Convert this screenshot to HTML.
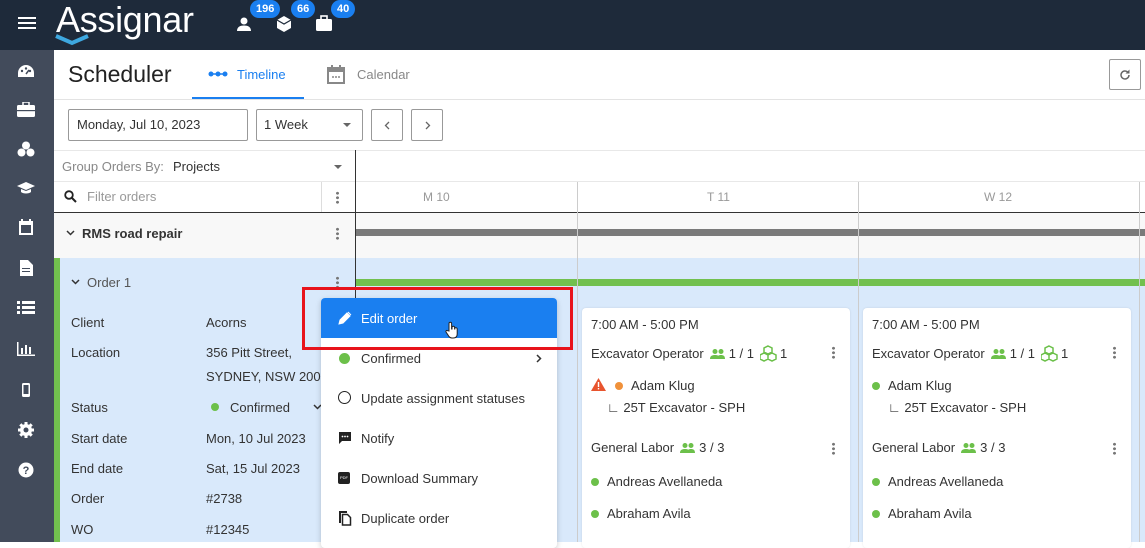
<!DOCTYPE html>
<html><head><meta charset="utf-8"><style>
*{margin:0;padding:0;box-sizing:border-box}
body{width:1145px;height:542px;overflow:hidden;position:relative;background:#fff;font-family:"Liberation Sans",sans-serif;color:#333;font-size:13px}
.a{position:absolute}
.t{position:absolute;white-space:nowrap}
.badge{position:absolute;background:#1a7ff0;color:#fff;font-weight:bold;font-size:11px;border-radius:10px;height:18px;line-height:18px;padding:0 6px}
.sb svg{position:absolute;left:17px;fill:#fff}
.dots{position:absolute;width:3px;height:13px;background:radial-gradient(circle,#777 1.3px,transparent 1.6px) 0 0/3px 4.5px repeat-y}
.card{position:absolute;top:308px;width:268px;height:240px;background:#fff;border-radius:4px;box-shadow:0 0 2px rgba(0,0,0,.1)}
.dot{position:absolute;width:8px;height:8px;border-radius:50%;background:#6cc04a}
.mi{position:absolute;left:40px;font-size:13px;color:#333}
.pp{display:inline-block;vertical-align:-2px;margin:0 3px 0 6px}
</style></head><body>
<svg width="0" height="0" style="position:absolute"><defs>
<g id="ppl"><circle cx="5" cy="3.5" r="2.5"/><circle cx="11" cy="3.5" r="2.5"/><path d="M0 11c0-3 2-4 5-4s5 1 5 4z M7 11c0-3 1.5-4 4-4s4 1 4 4z"/></g>
<g id="cub"><path d="M8 1l4 2v4l-4 2-4-2V3z M4 8l4 2v4l-4 2-4-2v-4z M12 8l4 2v4l-4 2-4-2v-4z" fill="none" stroke="#6cc04a" stroke-width="1.5"/></g>
</defs></svg>
<!-- top bar -->
<div class="a" style="left:0;top:0;width:1145px;height:50px;background:#1e2a3a"></div>
<div class="a" style="left:18px;top:17px;width:18px;height:2px;background:#fff;box-shadow:0 5px 0 #fff,0 10px 0 #fff"></div>
<div class="t" style="left:56px;top:-1px;font-size:36px;color:#fff;letter-spacing:-0.3px">Assignar</div>
<svg class="a" style="left:54px;top:34px" width="36" height="12"><path d="M2 2 L18 9 L34 2" stroke="#3ea8e0" stroke-width="4" fill="none"/></svg>
<svg class="a" style="left:236px;top:16px" width="16" height="16" fill="#fff"><circle cx="8" cy="5" r="3.5"/><path d="M1 15c0-4 3-5.5 7-5.5s7 1.5 7 5.5z"/></svg>
<svg class="a" style="left:276px;top:15px" width="16" height="18" fill="#fff"><path d="M8 1l7 4v8l-7 4-7-4V5z"/><path d="M1 5l7 4 7-4" stroke="#1e2a3a" stroke-width="1.2" fill="none"/></svg>
<svg class="a" style="left:315px;top:14px" width="18" height="18" fill="#fff"><rect x="1" y="5" width="16" height="12" rx="1.5"/><rect x="6" y="2" width="6" height="4" fill="none" stroke="#fff" stroke-width="1.6"/></svg>
<div class="badge" style="left:250px;top:0">196</div>
<div class="badge" style="left:291px;top:0">66</div>
<div class="badge" style="left:331px;top:0">40</div>
<!-- sidebar -->
<div class="a sb" style="left:0;top:50px;width:54px;height:492px;background:#424b5b">
<svg style="top:14px" width="18" height="14"><path d="M9 1a8 8 0 0 0-8 8v4h16V9a8 8 0 0 0-8-8z"/><circle cx="5" cy="7" r="1.2" fill="#424b5b"/><circle cx="9" cy="4.5" r="1.2" fill="#424b5b"/><circle cx="13" cy="7" r="1.2" fill="#424b5b"/><path d="M9 10l3-4" stroke="#424b5b" stroke-width="1.5"/></svg>
<svg style="top:52px" width="18" height="15"><rect x="0" y="3" width="18" height="12" rx="1.5"/><rect x="6" y="0" width="6" height="4" fill="none" stroke="#fff" stroke-width="1.5"/><rect x="0" y="8" width="18" height="1.2" fill="#424b5b"/></svg>
<svg style="top:91px" width="18" height="16"><circle cx="9" cy="4.5" r="4"/><circle cx="4.5" cy="11.5" r="4"/><circle cx="13.5" cy="11.5" r="4"/></svg>
<svg style="top:131px" width="18" height="14"><path d="M9 1L0 5l9 4 9-4z"/><path d="M4 8v3c2 2 8 2 10 0V8l-5 2z"/></svg>
<svg style="top:168px" width="18" height="18"><path d="M2 3h14v14H2z M4 7v8h10V7z" fill-rule="evenodd"/><rect x="4" y="1" width="2" height="4"/><rect x="12" y="1" width="2" height="4"/></svg>
<svg style="top:209px" width="18" height="18"><path d="M3 1h8l5 5v11H3z M5 9h8v1H5z M5 12h8v1H5z" fill-rule="evenodd"/></svg>
<svg style="top:251px" width="18" height="14"><rect x="0" y="0" width="3" height="3"/><rect x="5" y="0" width="13" height="3"/><rect x="0" y="5" width="3" height="3"/><rect x="5" y="5" width="13" height="3"/><rect x="0" y="10" width="3" height="3"/><rect x="5" y="10" width="13" height="3"/></svg>
<svg style="top:292px" width="18" height="14"><path d="M0 0h1.5v12.5H18V14H0z"/><rect x="4" y="6" width="2" height="6"/><rect x="8" y="3" width="2" height="9"/><rect x="12" y="5" width="2" height="7"/></svg>
<svg style="top:332px" width="18" height="16"><rect x="5" y="1" width="8" height="14" rx="1.5"/><rect x="6.5" y="3" width="5" height="9" fill="#424b5b"/></svg>
<svg style="top:371px" width="18" height="18"><circle cx="9" cy="9" r="6"/><g stroke="#fff" stroke-width="3"><path d="M9 1v16M1 9h16M3.3 3.3l11.4 11.4M14.7 3.3L3.3 14.7"/></g><circle cx="9" cy="9" r="2.5" fill="#424b5b"/></svg>
<svg style="top:411px" width="18" height="18"><circle cx="9" cy="9" r="7.5"/><text x="9" y="13" font-size="11" font-weight="bold" text-anchor="middle" fill="#424b5b" font-family="Liberation Sans">?</text></svg>
</div>
<!-- header -->
<div class="t" style="left:68px;top:61px;font-size:23px;color:#222">Scheduler</div>
<svg class="a" style="left:208px;top:71px" width="20" height="6"><path d="M2 3h16" stroke="#1a7ff0" stroke-width="1.5"/><circle cx="3" cy="3" r="2.5" fill="#1a7ff0"/><circle cx="10" cy="3" r="2.5" fill="#1a7ff0"/><circle cx="17" cy="3" r="2.5" fill="#1a7ff0"/></svg>
<div class="t" style="left:237px;top:67px;color:#1a7ff0;font-size:13px">Timeline</div>
<div class="a" style="left:192px;top:97px;width:112px;height:2px;background:#1a7ff0"></div>
<svg class="a" style="left:327px;top:65px" width="18" height="19"><path d="M1 3h16v15H1z" fill="none" stroke="#888" stroke-width="2"/><rect x="1" y="3" width="16" height="4" fill="#888"/><rect x="4" y="0" width="2" height="4" fill="#888"/><rect x="12" y="0" width="2" height="4" fill="#888"/><circle cx="6" cy="12" r="1" fill="#888"/><circle cx="9" cy="12" r="1" fill="#888"/><circle cx="12" cy="12" r="1" fill="#888"/></svg>
<div class="t" style="left:357px;top:67px;color:#888">Calendar</div>
<div class="a" style="left:1109px;top:59px;width:32px;height:31px;border:1px solid #999;border-radius:2px"></div>
<svg class="a" style="left:1119px;top:69px" width="12" height="12"><path d="M10 6a4 4 0 1 1-1.2-2.9" fill="none" stroke="#666" stroke-width="1.5"/><path d="M10.5 0.5v4h-4z" fill="#666"/></svg>
<div class="a" style="left:54px;top:99px;width:1091px;height:1px;background:#e3e3e3"></div>
<!-- toolbar -->
<div class="a" style="left:68px;top:109px;width:180px;height:32px;border:1px solid #999;border-radius:2px"></div>
<div class="t" style="left:77px;top:117px">Monday, Jul 10, 2023</div>
<div class="a" style="left:256px;top:109px;width:107px;height:32px;border:1px solid #999;border-radius:2px"></div>
<div class="t" style="left:264px;top:117px">1 Week</div>
<div class="a" style="left:343px;top:123px;border:4px solid transparent;border-top:4px solid #666"></div>
<div class="a" style="left:371px;top:109px;width:32px;height:32px;border:1px solid #999;border-radius:2px"></div>
<svg class="a" style="left:384px;top:121px" width="6" height="9"><path d="M5 1L1.5 4.5 5 8" fill="none" stroke="#666" stroke-width="1.3"/></svg>
<div class="a" style="left:411px;top:109px;width:32px;height:32px;border:1px solid #999;border-radius:2px"></div>
<svg class="a" style="left:425px;top:121px" width="6" height="9"><path d="M1 1l3.5 3.5L1 8" fill="none" stroke="#666" stroke-width="1.3"/></svg>
<div class="a" style="left:54px;top:150px;width:1091px;height:1px;background:#e8e8e8"></div>
<!-- group by -->
<div class="t" style="left:62px;top:159px;color:#888">Group Orders By:</div>
<div class="t" style="left:173px;top:159px;color:#333">Projects</div>
<div class="a" style="left:334px;top:165px;border:4px solid transparent;border-top:4px solid #666"></div>
<div class="a" style="left:54px;top:181px;width:1091px;height:1px;background:#e8e8e8"></div>
<svg class="a" style="left:64px;top:190px" width="13" height="13"><circle cx="5" cy="5" r="3.8" fill="none" stroke="#222" stroke-width="1.8"/><path d="M8 8l4 4" stroke="#222" stroke-width="2"/></svg>
<div class="t" style="left:87px;top:189px;color:#999">Filter orders</div>
<div class="a" style="left:321px;top:182px;width:1px;height:30px;background:#ddd"></div>
<div class="dots" style="left:336px;top:191px"></div>
<!-- day headers -->
<div class="t" style="left:423px;top:190px;color:#999;font-size:12px">M 10</div>
<div class="t" style="left:707px;top:190px;color:#999;font-size:12px">T 11</div>
<div class="t" style="left:984px;top:190px;color:#999;font-size:12px">W 12</div>
<div class="a" style="left:54px;top:212px;width:1091px;height:1px;background:#333"></div>
<!-- RMS row -->
<div class="a" style="left:54px;top:213px;width:1091px;height:45px;background:#f8f8f8"></div>
<div class="a" style="left:355px;top:229px;width:790px;height:7px;background:#7a7a7a"></div>
<svg class="a" style="left:66px;top:230px" width="9" height="6"><path d="M1 1l3.5 3.5L8 1" fill="none" stroke="#333" stroke-width="1.5"/></svg>
<div class="t" style="left:82px;top:226px;font-weight:bold;color:#333">RMS road repair</div>
<div class="dots" style="left:336px;top:227px"></div>
<!-- order row -->
<div class="a" style="left:54px;top:258px;width:1091px;height:284px;background:#d9e9fb"></div>
<div class="a" style="left:54px;top:258px;width:6px;height:284px;background:#72c04e"></div>
<div class="a" style="left:355px;top:279px;width:790px;height:7px;background:#72c04e"></div>
<div class="a" style="left:577px;top:182px;width:1px;height:360px;background:#ccc"></div>
<div class="a" style="left:858px;top:182px;width:1px;height:360px;background:#ccc"></div>
<div class="a" style="left:1139px;top:182px;width:1px;height:360px;background:#ccc"></div>
<div class="a" style="left:355px;top:150px;width:1px;height:392px;background:#333"></div>
<svg class="a" style="left:71px;top:279px" width="9" height="6"><path d="M1 1l3.5 3.5L8 1" fill="none" stroke="#333" stroke-width="1.5"/></svg>
<div class="t" style="left:87px;top:275px;color:#555">Order 1</div>
<div class="dots" style="left:336px;top:276px"></div>
<div class="t" style="left:71px;top:315px">Client</div><div class="t" style="left:206px;top:315px">Acorns</div>
<div class="t" style="left:71px;top:345px">Location</div><div class="t" style="left:206px;top:345px">356 Pitt Street,</div>
<div class="t" style="left:206px;top:369px">SYDNEY, NSW 2000</div>
<div class="t" style="left:71px;top:400px">Status</div><div class="dot" style="left:211px;top:403px"></div><div class="t" style="left:230px;top:400px">Confirmed</div>
<svg class="a" style="left:313px;top:404px" width="9" height="6"><path d="M1 1l3.5 3.5L8 1" fill="none" stroke="#333" stroke-width="1.5"/></svg>
<div class="t" style="left:71px;top:431px">Start date</div><div class="t" style="left:206px;top:431px">Mon, 10 Jul 2023</div>
<div class="t" style="left:71px;top:461px">End date</div><div class="t" style="left:206px;top:461px">Sat, 15 Jul 2023</div>
<div class="t" style="left:71px;top:491px">Order</div><div class="t" style="left:206px;top:491px">#2738</div>
<div class="t" style="left:71px;top:522px">WO</div><div class="t" style="left:206px;top:522px">#12345</div>
<!-- cards -->
<div class="card" style="left:582px"></div>
<div class="card" style="left:863px"></div>
<div class="t" style="left:591px;top:317px">7:00 AM - 5:00 PM</div>
<div class="t" style="left:872px;top:317px">7:00 AM - 5:00 PM</div>
<div class="t" style="left:591px;top:345px">Excavator Operator<svg class="pp" width="16" height="12" fill="#6cc04a"><use href="#ppl"/></svg>1 / 1<svg class="pp" width="17" height="17" style="vertical-align:-4px"><use href="#cub"/></svg>1</div>
<div class="t" style="left:872px;top:345px">Excavator Operator<svg class="pp" width="16" height="12" fill="#6cc04a"><use href="#ppl"/></svg>1 / 1<svg class="pp" width="17" height="17" style="vertical-align:-4px"><use href="#cub"/></svg>1</div>
<div class="dots" style="left:832px;top:346px"></div><div class="dots" style="left:1113px;top:346px"></div>
<svg class="a" style="left:591px;top:378px" width="15" height="13"><path d="M7.5 0L15 13H0z" fill="#e8542e"/><rect x="6.8" y="4" width="1.4" height="5" fill="#fff"/><rect x="6.8" y="10" width="1.4" height="1.4" fill="#fff"/></svg>
<div class="dot" style="left:615px;top:382px;background:#f0913a"></div>
<div class="t" style="left:631px;top:378px">Adam Klug</div>
<div class="dot" style="left:872px;top:382px"></div><div class="t" style="left:888px;top:378px">Adam Klug</div>
<div class="t" style="left:607px;top:400px">&#8735; 25T Excavator - SPH</div>
<div class="t" style="left:888px;top:400px">&#8735; 25T Excavator - SPH</div>
<div class="t" style="left:591px;top:440px">General Labor<svg class="pp" width="16" height="12" fill="#6cc04a"><use href="#ppl"/></svg>3 / 3</div>
<div class="t" style="left:872px;top:440px">General Labor<svg class="pp" width="16" height="12" fill="#6cc04a"><use href="#ppl"/></svg>3 / 3</div>
<div class="dots" style="left:832px;top:442px"></div><div class="dots" style="left:1113px;top:442px"></div>
<div class="dot" style="left:591px;top:478px"></div><div class="t" style="left:607px;top:474px">Andreas Avellaneda</div>
<div class="dot" style="left:872px;top:478px"></div><div class="t" style="left:888px;top:474px">Andreas Avellaneda</div>
<div class="dot" style="left:591px;top:510px"></div><div class="t" style="left:607px;top:506px">Abraham Avila</div>
<div class="dot" style="left:872px;top:510px"></div><div class="t" style="left:888px;top:506px">Abraham Avila</div>
<!-- menu -->
<div class="a" style="left:321px;top:298px;width:236px;height:250px;background:#fff;border-radius:4px;box-shadow:0 2px 6px rgba(0,0,0,.2)">
 <div class="a" style="left:0;top:0;width:236px;height:40px;background:#1a7ff0;border-radius:4px 4px 0 0"></div>
 <svg class="a" style="left:17px;top:13px" width="14" height="14"><path d="M1 13l1-4 7-7 3 3-7 7z M10 1l3 3" fill="#fff" stroke="#fff" stroke-width="1"/></svg>
 <div class="mi" style="top:13px;color:#fff">Edit order</div>
 <div class="dot" style="left:18px;top:55px;width:11px;height:11px"></div>
 <div class="mi" style="top:53px">Confirmed</div>
 <svg class="a" style="left:215px;top:56px" width="6" height="9"><path d="M1 1l3.5 3.5L1 8" fill="none" stroke="#333" stroke-width="1.5"/></svg>
 <div class="a" style="left:17px;top:93px;width:13px;height:13px;border:1.6px solid #222;border-radius:50%"></div>
 <div class="mi" style="top:93px">Update assignment statuses</div>
 <svg class="a" style="left:17px;top:133px" width="14" height="14"><path d="M1 1h12v9H4l-3 3z" fill="#222"/><circle cx="4.5" cy="5.5" r=".9" fill="#fff"/><circle cx="7" cy="5.5" r=".9" fill="#fff"/><circle cx="9.5" cy="5.5" r=".9" fill="#fff"/></svg>
 <div class="mi" style="top:133px">Notify</div>
 <div class="a" style="left:17px;top:174px;width:12px;height:12px;background:#222;border-radius:2px;color:#fff;font-size:4px;line-height:12px;text-align:center">PDF</div>
 <div class="mi" style="top:173px">Download Summary</div>
 <svg class="a" style="left:17px;top:212px" width="14" height="16"><path d="M1 1h8v2H3v10H1z" fill="#222"/><path d="M4.5 4.5h5l3 3v7.5h-8z" fill="none" stroke="#222" stroke-width="1.5"/></svg>
 <div class="mi" style="top:213px">Duplicate order</div>
</div>
<div class="a" style="left:302px;top:287px;width:271px;height:63px;border:3px solid #e8131b"></div>
<svg class="a" style="left:445px;top:321px" width="14" height="18"><path d="M4 10V2.5a1.3 1.3 0 0 1 2.6 0V8h.4V6.5a1.3 1.3 0 0 1 2.6 0V8h.2V7.3a1.3 1.3 0 0 1 2.4.5V13c0 2.5-1.5 4-4 4H7c-2 0-3-1-4-3L1 11c-.5-1 .5-2 1.5-1.3z" fill="#fff" stroke="#222" stroke-width="1"/></svg>
</body></html>
